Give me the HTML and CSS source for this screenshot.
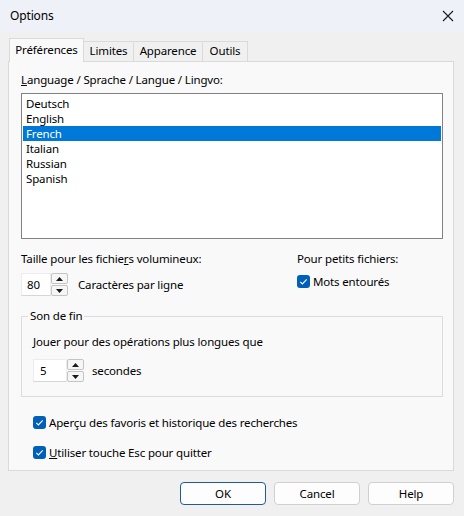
FILE: index.html
```html
<!DOCTYPE html>
<html lang="fr">
<head>
<meta charset="utf-8">
<title>Options</title>
<link rel="stylesheet" href="styles.css">
</head>
<body>
<div class="window">
  <div class="titlebar">
    <span class="title">Options</span>
    <svg class="close" width="12" height="12" viewBox="0 0 12 12"><path d="M1 1 L11 11 M11 1 L1 11" stroke="#1a1a1a" stroke-width="1.1" fill="none"/></svg>
  </div>
  <div class="body">
    <div class="tabs">
      <div class="tab active">Préférences</div>
      <div class="tab tab-lim">Limites</div>
      <div class="tab tab-app">Apparence</div>
      <div class="tab tab-out">Outils</div>
    </div>
    <div class="panel">
      <div class="label"><u>L</u>anguage / Sprache / Langue / Lingvo:</div>
      <div class="listbox">
        <div class="item">Deutsch</div>
        <div class="item">English</div>
        <div class="item selected">French</div>
        <div class="item">Italian</div>
        <div class="item">Russian</div>
        <div class="item">Spanish</div>
      </div>
      <div class="sizes">
        <div class="col-left">
          <div class="label">Taille pour les fichie<u>r</u>s volumineux:</div>
          <div class="spinrow">
            <div class="spin spin-a">
              <div class="spin-input">80</div>
              <div class="spin-btns">
                <div class="spin-btn"><svg width="7" height="4" viewBox="0 0 7 4"><polygon points="0,4 7,4 3.5,0" fill="#1a1a1a"/></svg></div>
                <div class="spin-btn"><svg width="7" height="4" viewBox="0 0 7 4"><polygon points="0,0 7,0 3.5,4" fill="#1a1a1a"/></svg></div>
              </div>
            </div>
            <span class="spin-text">Caractères par ligne</span>
          </div>
        </div>
        <div class="col-right">
          <div class="label">Pour petits fichiers:</div>
          <div class="checkrow">
            <span class="box"><svg width="13" height="13" viewBox="0 0 13 13"><path d="M3.3 6.8 L5.4 8.9 L9.7 4.4" stroke="#fff" stroke-width="1.1" fill="none"/></svg></span>
            <span>Mots entourés</span>
          </div>
        </div>
      </div>
      <fieldset class="group">
        <legend>Son de fin</legend>
        <div class="group-inner">
          <div class="label">Jouer pour des opérations plus longues que</div>
          <div class="spinrow">
            <div class="spin spin-b">
              <div class="spin-input">5</div>
              <div class="spin-btns">
                <div class="spin-btn"><svg width="7" height="4" viewBox="0 0 7 4"><polygon points="0,4 7,4 3.5,0" fill="#1a1a1a"/></svg></div>
                <div class="spin-btn"><svg width="7" height="4" viewBox="0 0 7 4"><polygon points="0,0 7,0 3.5,4" fill="#1a1a1a"/></svg></div>
              </div>
            </div>
            <span class="spin-text">secondes</span>
          </div>
        </div>
      </fieldset>
      <div class="checks">
        <div class="checkrow">
          <span class="box"><svg width="13" height="13" viewBox="0 0 13 13"><path d="M3.3 6.8 L5.4 8.9 L9.7 4.4" stroke="#fff" stroke-width="1.1" fill="none"/></svg></span>
          <span>Aperçu des favoris et historique des recherches</span>
        </div>
        <div class="checkrow">
          <span class="box"><svg width="13" height="13" viewBox="0 0 13 13"><path d="M3.3 6.8 L5.4 8.9 L9.7 4.4" stroke="#fff" stroke-width="1.1" fill="none"/></svg></span>
          <span><u>U</u>tiliser touche Esc pour quitter</span>
        </div>
      </div>
    </div>
    <div class="buttons">
      <div class="btn default">OK</div>
      <div class="btn">Cancel</div>
      <div class="btn">Help</div>
    </div>
  </div>
</div>
</body>
</html>
```
FILE: styles.css
```css
* { box-sizing: border-box; }
html, body { margin: 0; padding: 0; }
body {
  width: 464px;
  height: 516px;
  background: #f0f0f0;
  font-family: "Noto Sans", "Open Sans", sans-serif;
  font-size: 11.5px;
  letter-spacing: -0.15px;
  color: #000;
  overflow: hidden;
}
.window { width: 464px; height: 516px; }
.titlebar {
  height: 32px;
  background: #eef2f8;
  display: flex;
  align-items: center;
  justify-content: space-between;
  padding: 0 10px 0 10px;
}
.title { font-size: 12px; line-height: 16px; }
.body { padding: 6px 10px 0 8px; }
.tabs {
  display: flex;
  align-items: flex-end;
  height: 23px;
  margin-left: 1px;
}
.tab {
  height: 20px;
  line-height: 18px;
  text-align: center;
  background: #f0f0f0;
  border: 1px solid #dadada;
  border-bottom: none;
  border-left: none;
}
.tab.active {
  position: relative;
  z-index: 1;
  height: 24px;
  line-height: 22px;
  margin-bottom: -1px;
  background: #f9f9f9;
  border-left: 1px solid #dadada;
  width: 75px;
}
.tab-lim { width: 50px; }
.tab-app { width: 69px; }
.tab-out { width: 45px; }
.panel {
  width: 446px;
  height: 410px;
  background: #f9f9f9;
  border: 1px solid #dadada;
  padding: 10px 10px 0 12px;
}
.label { line-height: 16px; }
.listbox {
  margin-top: 5px;
  width: 422px;
  height: 146px;
  background: #fff;
  border: 1px solid #828282;
  padding: 2px 1px;
}
.item { line-height: 15px; height: 15px; padding-left: 3px; }
.item.selected { background: #0078d7; color: #fff; }
.sizes {
  display: flex;
  margin-top: 12px;
}
.col-left { width: 276px; }
.col-right { flex: 1; }
.spinrow {
  display: flex;
  align-items: center;
  margin-top: 6px;
  height: 23px;
}
.spin { display: flex; height: 23px; }
.spin-input {
  background: #fff;
  border: 1px solid #ececec;
  border-bottom-color: #d6d6d6;
  line-height: 21px;
  padding-left: 5px;
}
.spin-a .spin-input { width: 30px; }
.spin-b .spin-input { width: 34px; padding-left: 6px; }
.spin-btns {
  width: 17px;
  display: flex;
  flex-direction: column;
  gap: 1px;
}
.spin-btn {
  flex: 1;
  background: #f6f6f6;
  border: 1px solid #c4c4c4;
  border-radius: 2px;
  display: flex;
  align-items: center;
  justify-content: center;
}
.spin-a + .spin-text { margin-left: 10px; }
.spin-b + .spin-text { margin-left: 8px; }
.checkrow {
  display: flex;
  align-items: center;
  height: 23px;
  margin-top: 3px;
}
.box {
  width: 13px;
  height: 13px;
  border-radius: 3px;
  background: #005fb8;
  margin-right: 3px;
  display: flex;
}
.group {
  margin: 12px 0 0 0;
  width: 422px;
  padding: 0 0 14px 0;
  border: 1px solid #dcdcdc;
  min-width: 0;
}
.group legend {
  padding: 0 2px;
  margin-left: 6px;
  line-height: 16px;
}
.group-inner { padding: 10px 0 0 11px; }
.group-inner .spinrow { margin-top: 9px; }
.checks { padding-left: 12px; margin-top: 17px; }
.checks .checkrow { height: 16px; margin-top: 0; }
.checks .checkrow + .checkrow { margin-top: 14px; }
.buttons {
  display: flex;
  justify-content: flex-end;
  gap: 8px;
  margin-top: 11px;
  margin-right: 0;
}
.btn {
  width: 86px;
  height: 23px;
  line-height: 21px;
  text-align: center;
  background: #fdfdfd;
  border: 1px solid #d0d0d0;
  border-radius: 4px;
}
.btn.default { border-color: #1f5c93; }
```
